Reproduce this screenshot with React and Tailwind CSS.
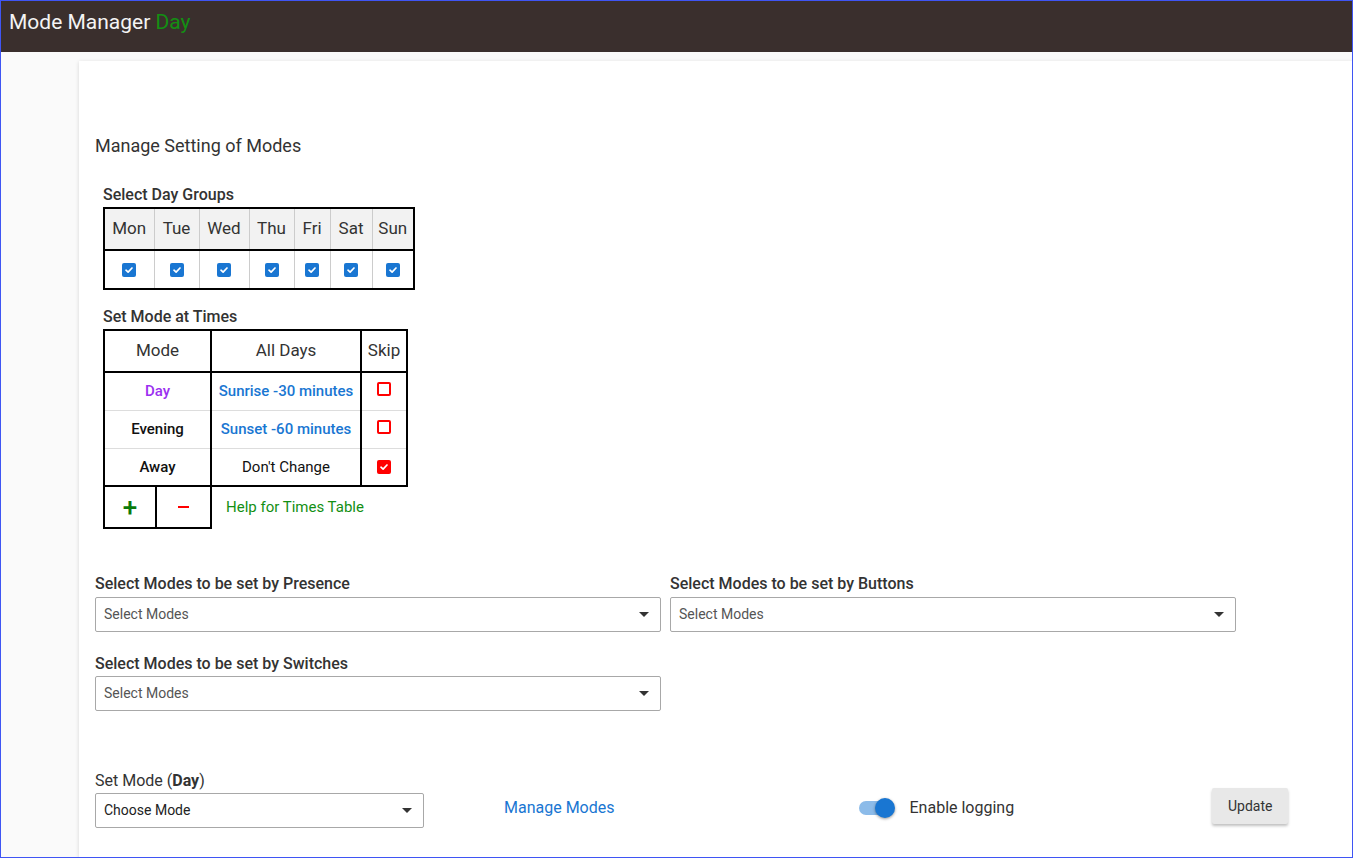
import React from "react";

const days = ["Mon", "Tue", "Wed", "Thu", "Fri", "Sat", "Sun"];
const dayWidths = [50, 45, 50, 45, 36, 42, 42];

function BlueCheck() {
  return (
    <span className="inline-flex h-[14px] w-[14px] items-center justify-center rounded-[2px] bg-[#1976d2]">
      <svg width="10" height="10" viewBox="0 0 10 10">
        <path d="M2 5.2 L4.1 7.1 L8 3" fill="none" stroke="white" strokeWidth="1.7" strokeLinecap="round" strokeLinejoin="round" />
      </svg>
    </span>
  );
}

function RedBox({ checked }) {
  if (checked) {
    return (
      <span className="inline-flex h-[14px] w-[14px] items-center justify-center rounded-[2px] bg-[#ff0000]">
        <svg width="10" height="10" viewBox="0 0 10 10">
          <path d="M2 5.2 L4.1 7.1 L8 3" fill="none" stroke="white" strokeWidth="1.7" strokeLinecap="round" strokeLinejoin="round" />
        </svg>
      </span>
    );
  }
  return <span className="inline-block h-[14px] w-[14px] rounded-[2px] border-2 border-[#ff0000]" />;
}

function Caret() {
  return (
    <svg width="10" height="5" viewBox="0 0 10 5">
      <path d="M0 0 L10 0 L5 5 Z" fill="#333" />
    </svg>
  );
}

function SelectBox({ text, width, dark }) {
  return (
    <div
      className={`flex h-[35px] items-center justify-between rounded-[2px] border border-[#a8a8a8] bg-white pl-[8px] pr-[11px] text-[14px] ${dark ? "text-[#222]" : "text-[#555]"}`}
      style={{ width }}
    >
      <span>{text}</span>
      <Caret />
    </div>
  );
}

function Label({ children }) {
  return <div className="h-[20px] text-[16px] font-medium leading-[20px] text-[#333]">{children}</div>;
}

export default function App() {
  return (
    <div
      className="flex h-[858px] w-[1353px] flex-col overflow-hidden border border-[#3f55f4] bg-[#fafafa] text-[#333]"
      style={{ fontFamily: "Roboto, 'Liberation Sans', sans-serif" }}
    >
      {/* top bar */}
      <header className="flex h-[51px] shrink-0 items-center bg-[#3a2f2d] pl-[8px] text-[21px] text-[#f4f4f4]">
        <span className="mt-[-8px]">
          Mode Manager <span className="text-[#138f13]">Day</span>
        </span>
      </header>

      <div className="flex flex-1 pt-[9px]">
        <main className="ml-[78px] flex-1 bg-white pl-[16px] shadow-[0_1px_4px_rgba(0,0,0,0.15)]">
          <h1 className="mt-[71px] h-[27px] text-[18px] leading-[27px] text-[#333]">Manage Setting of Modes</h1>

          {/* day groups */}
          <div className="ml-[8px] mt-[26px]">
            <Label>Select Day Groups</Label>
            <table className="mt-[2px] border-collapse border-2 border-black text-[17px] text-[#333]">
              <thead>
                <tr className="h-[42px] bg-[#f2f2f2]">
                  {days.map((d, i) => (
                    <th
                      key={d}
                      className={`border-b-2 border-b-black p-0 text-center font-normal ${i > 0 ? "border-l border-l-[#cccccc]" : ""}`}
                      style={{ width: dayWidths[i] }}
                    >
                      {d}
                    </th>
                  ))}
                </tr>
              </thead>
              <tbody>
                <tr className="h-[39px]">
                  {days.map((d, i) => (
                    <td key={d} className={`p-0 text-center align-middle ${i > 0 ? "border-l border-l-[#cccccc]" : ""}`}>
                      <span className="inline-flex pt-[2px]">
                        <BlueCheck />
                      </span>
                    </td>
                  ))}
                </tr>
              </tbody>
            </table>
          </div>

          {/* times table */}
          <div className="ml-[8px] mt-[17px]">
            <Label>Set Mode at Times</Label>
            <table className="mt-[2px] border-collapse text-[15px]">
              <tbody>
                <tr className="h-[42px] text-[17px] text-[#333]">
                  <td className="w-[107px] border-2 border-black p-0 text-center">Mode</td>
                  <td className="w-[150px] border-2 border-black p-0 text-center">All Days</td>
                  <td className="w-[46px] border-2 border-black p-0 text-center">Skip</td>
                </tr>
                {[
                  { mode: "Day", modeCls: "font-medium text-[#9b30f0]", time: "Sunrise -30 minutes", timeCls: "font-medium text-[#1976d2]", checked: false },
                  { mode: "Evening", modeCls: "font-medium text-[#111]", time: "Sunset -60 minutes", timeCls: "font-medium text-[#1976d2]", checked: false },
                  { mode: "Away", modeCls: "font-medium text-[#111]", time: "Don't Change", timeCls: "text-[#111]", checked: true },
                ].map((r, i) => (
                  <tr key={r.mode} className="h-[38px]">
                    <td className={`border-x-2 border-x-black p-0 text-center ${i > 0 ? "border-t border-t-[#dddddd]" : ""} ${r.modeCls}`}>{r.mode}</td>
                    <td className={`border-x-2 border-x-black p-0 text-center ${i > 0 ? "border-t border-t-[#dddddd]" : ""} ${r.timeCls}`}>{r.time}</td>
                    <td className={`border-x-2 border-x-black p-0 text-center ${i > 0 ? "border-t border-t-[#dddddd]" : ""}`}>
                      <span className="inline-flex pt-[2px]">
                        <RedBox checked={r.checked} />
                      </span>
                    </td>
                  </tr>
                ))}
                <tr className="h-[42px]">
                  <td className="border-2 border-black p-0">
                    <div className="flex h-[40px]">
                      <div className="flex w-[52px] items-center justify-center border-r-2 border-black text-[26px] font-medium leading-none text-[#0b7a0b]">
                        +
                      </div>
                      <div className="flex flex-1 items-center justify-center">
                        <span className="block h-[2px] w-[11px] bg-[#ff0000]" />
                      </div>
                    </div>
                  </td>
                  <td colSpan={2} className="border-t-2 border-t-black p-0 pl-[14px] text-left text-[15px] text-[#138f13]">
                    Help for Times Table
                  </td>
                </tr>
              </tbody>
            </table>
          </div>

          {/* mode selectors */}
          <div className="mt-[45px] flex gap-[9px]">
            <div className="flex flex-col gap-[3px]">
              <Label>Select Modes to be set by Presence</Label>
              <SelectBox text="Select Modes" width={566} />
            </div>
            <div className="flex flex-col gap-[3px]">
              <Label>Select Modes to be set by Buttons</Label>
              <SelectBox text="Select Modes" width={566} />
            </div>
          </div>

          <div className="mt-[22px] flex flex-col gap-[2px]">
            <Label>Select Modes to be set by Switches</Label>
            <SelectBox text="Select Modes" width={566} />
          </div>

          {/* bottom controls */}
          <div className="mt-[60px] flex items-end">
            <div className="flex flex-col gap-[2px]">
              <div className="h-[20px] text-[16px] leading-[20px] text-[#333]">
                Set Mode (<span className="font-bold">Day</span>)
              </div>
              <SelectBox text="Choose Mode" width={329} dark />
            </div>
            <div className="ml-[80px] flex h-[35px] items-center pb-[5px] text-[16px] text-[#1976d2]">Manage Modes</div>
            <div className="ml-[244px] flex h-[35px] items-center pb-[5px]">
              <div className="relative h-[14px] w-[35px] rounded-full bg-[#8cbbe9]">
                <span className="absolute right-[-1px] top-[-3px] h-[20px] w-[20px] rounded-full bg-[#1976d2] shadow-[0_1px_3px_rgba(0,0,0,0.4)]" />
              </div>
              <span className="ml-[16px] text-[16px] text-[#333]">Enable logging</span>
            </div>
            <div className="ml-[198px] flex h-[40px] items-start">
              <button className="h-[36px] w-[76px] rounded-[2px] bg-[#e8e8e8] text-[14px] text-[#333] shadow-[0_2px_3px_rgba(0,0,0,0.25)]">
                Update
              </button>
            </div>
          </div>
        </main>
      </div>
    </div>
  );
}
